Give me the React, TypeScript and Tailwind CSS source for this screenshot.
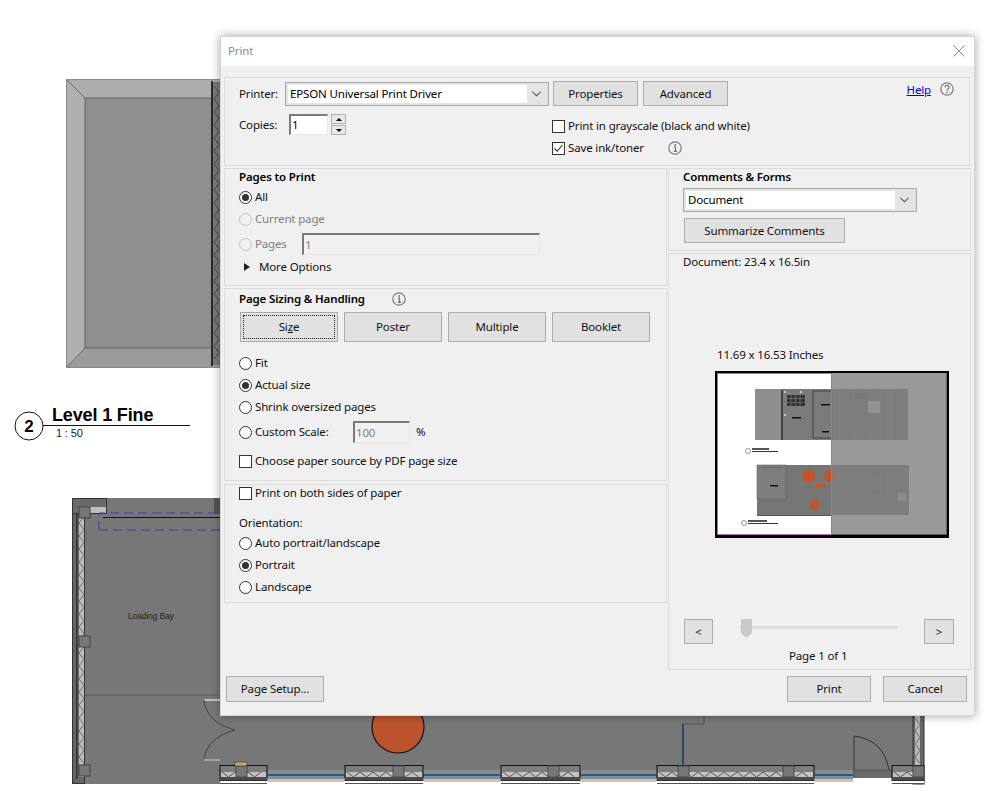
import { ReactNode } from 'react';

// zigzag hatch for wall sections, drawn in page coordinates
function zigV(x1: number, x2: number, y1: number, y2: number, step = 13) {
    const pts: string[] = [];
    let side = 0;
    for (let y = y1; y <= y2; y += step / 2) {
        pts.push(`${side ? x2 : x1},${y}`);
        side = 1 - side;
    }
    return pts.join(' ');
}

function zigH(x1: number, x2: number, y1: number, y2: number, step = 13) {
    const pts: string[] = [];
    let side = 0;
    for (let x = x1; x <= x2; x += step / 2) {
        pts.push(`${x},${side ? y2 : y1}`);
        side = 1 - side;
    }
    return pts.join(' ');
}

const wallSegments = [
    [220, 267],
    [345, 423],
    [501, 580],
    [657, 814],
    [892, 924],
];
const windowSegments = [
    [268, 344],
    [424, 500],
    [581, 656],
    [815, 853],
];
const wallColumns = [241, 398, 553, 683, 788, 918];

function Backdrop() {
    return (
        <svg className="absolute inset-0" width={1007} height={791} viewBox="0 0 1007 791">
            {/* roof plan */}
            <polygon points="66,79 220,79 220,98 85,98" fill="#adadad" />
            <polygon points="66,79 85,98 85,348 66,368" fill="#b0b0b0" />
            <polygon points="66,368 85,348 220,348 220,368" fill="#9b9b9b" />
            <rect x={85} y={98} width={135} height={250} fill="#8f8f8f" />
            <path d="M85 98 H220 M85 98 V348 H220 M66 79 L85 98 M66 368 L85 348" fill="none" stroke="#666" />
            <rect x={66.5} y={79.5} width={154} height={288} fill="none" stroke="#8a8a8a" />
            <rect x={213} y={82} width={7} height={283} fill="#7a7a7a" />
            <rect x={211} y={81} width={2} height={285} fill="#2a2a2a" />
            <polyline points={zigV(214, 219, 86, 364, 13)} fill="none" stroke="#3f3f3f" strokeWidth={0.8} />

            {/* level tag */}
            <circle cx={29} cy={426} r={14} fill="#fff" stroke="#111" />
            <line x1={43} y1={425.5} x2={190} y2={425.5} stroke="#111" />
            <text x={29} y={432} textAnchor="middle" className="fill-black font-['Liberation_Sans',sans-serif] text-[17px] font-bold">2</text>
            <text x={52} y={421} className="fill-black font-['Liberation_Sans',sans-serif] text-[18px] font-bold">Level 1 Fine</text>
            <text x={56} y={437} className="fill-[#1a1a3a] font-['Liberation_Sans',sans-serif] text-[11px]">1 : 50</text>

            {/* lower plan */}
            <rect x={72} y={498} width={852} height={286} fill="#777" />
            <rect x={72.5} y={498.5} width={12} height={285} fill="#666" stroke="#333" />
            <rect x={79} y={505} width={5} height={272} fill="#bdbdbd" />
            <polyline points={zigV(79, 84, 510, 772, 13)} fill="none" stroke="#555" strokeWidth={0.8} />
            <rect x={76} y={503} width={1.5} height={276} fill="#333" />
            <rect x={72.5} y={498.5} width={34} height={15} fill="#6a6a6a" stroke="#333" />
            <rect x={90} y={507} width={16} height={6} fill="#bdbdbd" />
            <rect x={79} y={507} width={11} height={11} fill="#777" stroke="#444" />
            <rect x={79} y={636} width={11} height={11} fill="#777" stroke="#444" />
            <rect x={79} y={765} width={11} height={11} fill="#777" stroke="#444" />
            <rect x={214} y={498} width={6} height={16} fill="#555" />
            <line x1={103} y1={517.5} x2={220} y2={517.5} stroke="#111" />
            <path d="M99 530 V513 H220 M99 530 H220" fill="none" stroke="#3a3ad0" strokeDasharray="9 5" />
            <text x={128} y={619} className="fill-[#2a1f24] font-['Liberation_Sans',sans-serif] text-[8.5px]">Loading Bay</text>
            <line x1={85} y1={695} x2={220} y2={695} stroke="#5f5f5f" />
            <path d="M204 700 H220" stroke="#ddd" strokeWidth={1.5} />
            <path d="M204 700 Q206 722 235 730 Q206 738 204 760 H220" fill="none" stroke="#444" />
            <path d="M204 760 H220" stroke="#bbb" strokeWidth={1.5} />

            {/* pool */}
            <circle cx={398} cy={727} r={26} fill="#bd532c" stroke="#111" strokeWidth={1.2} />

            {/* partition and door */}
            <line x1={683} y1={724} x2={683} y2={765} stroke="#123f5e" strokeWidth={1.6} />
            <path d="M683 724 H704 V716" fill="none" stroke="#555" />
            <path d="M854 770 V736 Q884 740 889 770" fill="none" stroke="#333" />
            <rect x={854} y={770} width={38} height={9} fill="#6a6a6a" stroke="#555" />

            {/* right wall */}
            <rect x={913} y={716} width={11} height={68} fill="#666" stroke="#333" />
            <rect x={915} y={716} width={5} height={54} fill="#b8b8b8" />
            <polyline points={zigV(915, 920, 718, 768, 13)} fill="none" stroke="#666" />

            {/* bottom wall */}
            <rect x={220} y={778} width={704} height={6} fill="#fff" />
            {windowSegments.map(([a, b]) => (
                <g key={a}>
                    <rect x={a} y={770} width={b - a} height={9} fill="#8c8c8c" />
                    <rect x={a} y={774} width={b - a} height={2} fill="#0f6496" />
                    <rect x={a} y={779} width={b - a} height={3} fill="#c4c4c4" />
                </g>
            ))}
            {wallSegments.map(([a, b]) => (
                <g key={a}>
                    <rect x={a} y={765.5} width={b - a} height={15} fill="#7c7c7c" stroke="#111" />
                    <rect x={a + 1} y={772} width={b - a - 2} height={5} fill="#c2c2c2" />
                    <polyline points={zigH(a + 2, b - 2, 772, 777, 13)} fill="none" stroke="#555" />
                    <rect x={a} y={777} width={b - a} height={3.5} fill="#4a4a4a" />
                    <line x1={a} y1={783.5} x2={b} y2={783.5} stroke="#555" />
                </g>
            ))}
            {wallColumns.map((x) => (
                <rect key={x} x={x - 5} y={766} width={11} height={11} fill="#767676" stroke="#4c4c4c" />
            ))}
            <rect x={235} y={762} width={12} height={4} fill="#c2a66a" stroke="#333" strokeWidth={0.6} />
        </svg>
    );
}

function PrintPreview() {
    return (
        <svg width={234} height={167} viewBox="715 370 234 167" className="block">
            <rect x={715} y={370} width={234} height={167} fill="#000" />
            <rect x={717} y={372} width={230} height={162} fill="#fff" />
            {/* upper plan */}
            <rect x={755} y={388} width={153} height={51} fill="#7b7b7b" />
            <rect x={755} y={388} width={26} height={51} fill="#8e8e8e" />
            <rect x={781} y={389} width={2} height={50} fill="#444" />
            <rect x={813} y={390} width={19} height={47} fill="none" stroke="#444" />
            <rect x={787} y={394} width={18} height={11} fill="#333" />
            <path d="M787 397.5 H805 M787 401.5 H805 M791 394 V405 M795.5 394 V405 M800 394 V405" stroke="#777" strokeWidth={0.7} />
            <rect x={792} y={416} width={9} height={1.5} fill="#111" />
            <rect x={821} y={403} width={9} height={1.5} fill="#111" />
            <rect x={822} y={430} width={7} height={1.5} fill="#111" />
            <rect x={868} y={400} width={12} height={12} fill="#d8d8d8" />
            <rect x={855} y={392} width={10} height={6} fill="#555" />
            <circle cx={801} cy={391} r={1} fill="#ddd" />
            <circle cx={785} cy={391} r={1} fill="#ddd" />
            <circle cx={785} cy={414} r={1} fill="#ddd" />
            <path d="M850 390 V437 M866 390 V437 M884 390 V437 M895 390 V437" stroke="#555" strokeWidth={0.8} />
            {/* tag */}
            <circle cx={748} cy={450} r={2.5} fill="#fff" stroke="#555" strokeWidth={0.6} />
            <rect x={752} y={447} width={17} height={2} fill="#555" />
            <rect x={752} y={450} width={26} height={0.8} fill="#000" />
            {/* lower plan */}
            <rect x={757} y={464} width={152} height={50} fill="#767676" />
            <rect x={757} y={464} width={29} height={34} fill="#7e7e7e" stroke="#666" strokeWidth={0.6} />
            <circle cx={809} cy={475} r={6.5} fill="#c4532a" />
            <circle cx={831} cy={475} r={6.5} fill="#c4532a" />
            <rect x={816} y={483} width={9} height={3} fill="#c4532a" />
            <circle cx={815} cy={504} r={5} fill="#c4532a" />
            <rect x={770} y={484} width={8} height={1.5} fill="#111" />
            <rect x={761} y={466} width={22} height={1} fill="#5a5ab0" />
            <rect x={757} y={514} width={75} height={1} fill="#555" />
            <rect x={872} y={472} width={12} height={20} fill="none" stroke="#555" strokeWidth={0.8} />
            <rect x={898} y={492} width={8} height={8} fill="#bbb" />
            {/* tag */}
            <circle cx={744} cy={522} r={2.5} fill="#fff" stroke="#555" strokeWidth={0.6} />
            <rect x={748} y={519} width={19} height={2} fill="#555" />
            <rect x={748} y={522} width={30} height={0.8} fill="#000" />
            {/* page edge and non printable area */}
            <rect x={717.5} y={372.5} width={114} height={161} fill="none" stroke="#c060c0" />
            <rect x={832} y={372} width={115} height={162} fill="#808080" fillOpacity={0.8} />
            <rect x={832} y={533} width={115} height={1} fill="#555" />
            <rect x={946} y={372} width={1} height={162} fill="#666" />
        </svg>
    );
}

function Btn({ className, children }: { className: string; children: ReactNode }) {
    return (
        <button type="button" className={`flex shrink-0 items-center justify-center border border-[#adadad] bg-[#e1e1e1] text-[#111] ${className}`}>
            {children}
        </button>
    );
}

function Radio({ label, checked, disabled, className = 'h-[22px]' }: { label: ReactNode; checked?: boolean; disabled?: boolean; className?: string }) {
    return (
        <div className={`flex items-center ${className}`}>
            <span className={`flex size-[13px] shrink-0 items-center justify-center rounded-full border ${disabled ? 'border-[#c4c4c4]' : 'border-[#333] bg-white'}`}>
                {checked && <span className="size-[7px] rounded-full bg-[#333]" />}
            </span>
            <span className={`ml-[3px] ${disabled ? 'text-[#7f7f7f]' : ''}`}>{label}</span>
        </div>
    );
}

function Check({ label, checked, className = 'h-[22px]' }: { label: string; checked?: boolean; className?: string }) {
    return (
        <div className={`flex items-center ${className}`}>
            <span className="flex size-[13px] shrink-0 items-center justify-center border border-[#333] bg-white">
                {checked && (
                    <svg width={11} height={11} viewBox="0 0 11 11">
                        <path d="M1.5 5.5 L4.2 8.2 L9.5 2" fill="none" stroke="#333" strokeWidth={1.1} />
                    </svg>
                )}
            </span>
            <span className="ml-[3px]">{label}</span>
        </div>
    );
}

function InfoIcon({ className = '' }: { className?: string }) {
    return (
        <svg width={14} height={14} viewBox="0 0 14 14" className={`shrink-0 ${className}`}>
            <circle cx={7} cy={7} r={6.2} fill="none" stroke="#7d7d7d" strokeWidth={1.2} />
            <path d="M6 6 H7.5 V10.4 M5.8 10.4 H9" fill="none" stroke="#6f6f6f" strokeWidth={1.2} />
            <rect x={6.4} y={3.2} width={1.6} height={1.6} fill="#6f6f6f" />
        </svg>
    );
}

function Chevron() {
    return (
        <svg width={9} height={6} viewBox="0 0 9 6">
            <path d="M0.5 0.8 L4.5 4.8 L8.5 0.8" fill="none" stroke="#555" strokeWidth={1.1} />
        </svg>
    );
}

function Field({ value, className }: { value: string; className: string }) {
    return (
        <div className={`flex shrink-0 items-center border border-t-2 border-l-2 border-t-[#7a7a7a] border-l-[#7a7a7a] border-r-[#e6e6e6] border-b-[#e6e6e6] pl-px ${className}`}>
            {value}
        </div>
    );
}

function Select({ value, className }: { value: string; className: string }) {
    return (
        <div className={`flex h-[24px] shrink-0 items-center border border-[#a6a6a6] bg-[#e4e4e4] p-[2px] ${className}`}>
            <div className="flex h-full min-w-0 flex-1 items-center bg-white pl-[2px] text-black">{value}</div>
            <div className="flex w-[19px] items-center justify-center"><Chevron /></div>
        </div>
    );
}

export default function App() {
    return (
        <div className="relative h-[791px] w-[1007px] overflow-hidden bg-white font-['Noto_Sans',sans-serif] text-[11.5px] leading-none tracking-[-0.15px] text-[#111]">
            <Backdrop />

            <div className="absolute left-[220px] top-[36px] flex h-[680px] w-[755px] flex-col border border-[#d4d4d4] bg-[#f0f0f0] shadow-[0_0_9px_rgba(0,0,0,0.35)]">
                {/* title bar */}
                <div className="flex h-[29px] shrink-0 items-center justify-between bg-white pb-[2px] pl-[7px] pr-[9px]">
                    <span className="text-[#8a8a8a]">Print</span>
                    <svg width={12} height={12} viewBox="0 0 12 12">
                        <path d="M0.5 0.5 L11.5 11.5 M11.5 0.5 L0.5 11.5" stroke="#8a8a8a" strokeWidth={1} />
                    </svg>
                </div>

                <div className="flex flex-1 flex-col pl-[3px] pr-[4px] pt-[11px]">
                    {/* printer panel */}
                    <section className="h-[89px] shrink-0 border border-[#dcdcdc] pl-[14px]">
                        <div className="mt-[3px] flex h-[25px] items-center">
                            <span className="w-[46px]">Printer:</span>
                            <Select value="EPSON Universal Print Driver" className="w-[264px]" />
                            <Btn className="ml-[4px] h-[25px] w-[85px]">Properties</Btn>
                            <Btn className="ml-[5px] h-[25px] w-[85px]">Advanced</Btn>
                            <a className="mb-[8px] ml-auto text-[#0000ee] underline">Help</a>
                            <svg width={14} height={14} viewBox="0 0 14 14" className="mb-[9px] ml-[9px] mr-[15px]">
                                <circle cx={7} cy={7} r={6.2} fill="none" stroke="#7d7d7d" strokeWidth={1.2} />
                                <path d="M5 5.4 A2 2 0 1 1 7.6 7.3 Q7 7.6 7 8.6" fill="none" stroke="#6f6f6f" strokeWidth={1.2} />
                                <rect x={6.3} y={9.6} width={1.5} height={1.5} fill="#6f6f6f" />
                            </svg>
                        </div>
                        <div className="flex">
                            <div className="mt-[8px] flex h-[21px] w-[313px] items-center">
                                <span className="w-[50px]">Copies:</span>
                                <Field value="1" className="h-[21px] w-[39px] bg-white text-black" />
                                <div className="ml-[3px] flex h-[21px] w-[15px] flex-col gap-px">
                                    <div className="flex flex-1 items-center justify-center border border-[#b0b0b0] bg-[#e8e8e8]">
                                        <span className="size-0 border-x-[3px] border-b-[3px] border-x-transparent border-b-black" />
                                    </div>
                                    <div className="flex flex-1 items-center justify-center border border-[#b0b0b0] bg-[#e8e8e8]">
                                        <span className="size-0 border-x-[3px] border-t-[3px] border-x-transparent border-t-black" />
                                    </div>
                                </div>
                            </div>
                            <div className="mt-[9px] w-[300px]">
                                <Check label="Print in grayscale (black and white)" className="h-[22px]" />
                                <div className="flex items-center">
                                    <Check label="Save ink/toner" checked className="h-[22px] w-[116px]" />
                                    <InfoIcon />
                                </div>
                            </div>
                        </div>
                    </section>

                    <div className="mt-[2px] flex gap-px">
                        {/* left column */}
                        <div className="flex w-[443px] shrink-0 flex-col">
                            <section className="h-[118px] border border-[#dcdcdc] pl-[14px]">
                                <div className="flex h-[15px] items-center font-semibold text-black">Pages to Print</div>
                                <Radio label="All" checked className="mt-[2px] h-[22px]" />
                                <Radio label="Current page" disabled />
                                <div className="mt-[3px] flex h-[22px] items-center">
                                    <Radio label="Pages" disabled className="w-[63px]" />
                                    <Field value="1" className="h-[22px] w-[238px] text-[#7f7f7f]" />
                                </div>
                                <div className="mt-px flex h-[22px] items-center pl-[5px]">
                                    <span className="size-0 border-y-[4px] border-l-[6px] border-y-transparent border-l-[#222]" />
                                    <span className="ml-[9px]">More Options</span>
                                </div>
                            </section>

                            <section className="mt-[2px] h-[193px] border border-[#dcdcdc] pl-[14px]">
                                <div className="flex h-[20px] items-center">
                                    <span className="w-[153px] font-semibold text-black">Page Sizing &amp; Handling</span>
                                    <InfoIcon />
                                </div>
                                <div className="mt-[3px] flex gap-[6px] pl-px">
                                    <Btn className="h-[30px] w-[98px] p-[2px]">
                                        <span className="flex size-full items-center justify-center border border-dotted border-[#222]">
                                            <span>Si<u>z</u>e</span>
                                        </span>
                                    </Btn>
                                    <Btn className="h-[30px] w-[98px]">Poster</Btn>
                                    <Btn className="h-[30px] w-[98px]">Multiple</Btn>
                                    <Btn className="h-[30px] w-[98px]">Booklet</Btn>
                                </div>
                                <Radio label="Fit" className="mt-[10px] h-[22px]" />
                                <Radio label="Actual size" checked />
                                <Radio label="Shrink oversized pages" />
                                <div className="mt-[3px] flex h-[22px] items-center">
                                    <Radio label="Custom Scale:" className="w-[114px]" />
                                    <Field value="100" className="h-[22px] w-[57px] text-[#7f7f7f]" />
                                    <span className="ml-[6px]">%</span>
                                </div>
                                <Check label="Choose paper source by PDF page size" className="mt-[7px] h-[22px]" />
                            </section>

                            <section className="mt-[3px] h-[119px] border border-[#dcdcdc] pl-[14px]">
                                <Check label="Print on both sides of paper" className="h-[16px]" />
                                <div className="mt-[13px] flex h-[18px] items-center">Orientation:</div>
                                <Radio label="Auto portrait/landscape" />
                                <Radio label="Portrait" checked />
                                <Radio label="Landscape" />
                            </section>
                        </div>

                        {/* right column */}
                        <div className="flex w-[303px] shrink-0 flex-col">
                            <section className="h-[83px] border border-[#dcdcdc] pl-[14px]">
                                <div className="flex h-[15px] items-center font-semibold text-black">Comments &amp; Forms</div>
                                <Select value="Document" className="mt-[4px] w-[234px]" />
                                <Btn className="ml-px mt-[6px] h-[25px] w-[161px]">Summarize Comments</Btn>
                            </section>

                            <section className="mt-[2px] flex h-[417px] flex-col border border-[#dcdcdc] pl-[14px]">
                                <div className="mt-px flex h-[14px] items-center">Document: 23.4 x 16.5in</div>
                                <div className="ml-[34px] mt-[79px] flex h-[14px] items-center">11.69 x 16.53 Inches</div>
                                <div className="ml-[32px] mt-[9px]"><PrintPreview /></div>
                                <div className="ml-px mt-[81px] flex h-[25px] items-center">
                                    <Btn className="h-[25px] w-[29px]">&lt;</Btn>
                                    <div className="relative mb-[9px] ml-[27px] h-[3px] w-[157px] border border-[#d6d6d6] bg-[#e7e7e7]">
                                        <svg width={11} height={19} viewBox="0 0 11 19" className="absolute -top-[8px] left-0">
                                            <path d="M0 0 H11 V14 L5.5 19 L0 14 Z" fill="#c9c9c9" />
                                        </svg>
                                    </div>
                                    <Btn className="ml-[27px] h-[25px] w-[30px]">&gt;</Btn>
                                </div>
                                <div className="ml-[106px] mt-[5px] flex h-[14px] items-center">Page 1 of 1</div>
                            </section>
                        </div>
                    </div>

                    {/* footer */}
                    <div className="mt-[6px] flex">
                        <Btn className="ml-[2px] h-[26px] w-[98px]">Page Setup...</Btn>
                        <Btn className="ml-auto h-[26px] w-[84px]">Print</Btn>
                        <Btn className="ml-[12px] mr-[3px] h-[26px] w-[84px]">Cancel</Btn>
                    </div>
                </div>
            </div>
        </div>
    );
}
